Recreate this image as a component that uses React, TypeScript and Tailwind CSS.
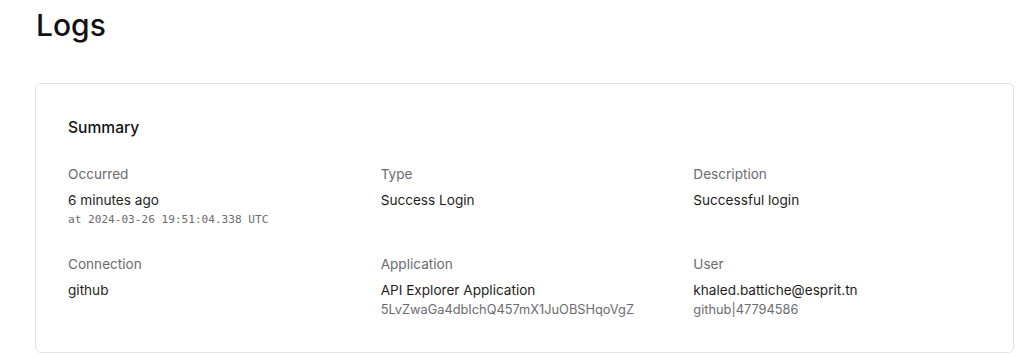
export default function App() {
  const font = { fontFamily: "Inter, 'Noto Sans', sans-serif" };
  const Label = ({ children }: { children: React.ReactNode }) => (
    <div className="text-[13.6px] leading-5 text-[#6b6b70]">{children}</div>
  );
  const Value = ({ children }: { children: React.ReactNode }) => (
    <div className="mt-1.5 text-[13.6px] leading-5 text-[#1e1e22]">{children}</div>
  );
  const Sub = ({ children, mono }: { children: React.ReactNode; mono?: boolean }) => (
    <div
      className={mono ? "text-[11.1px] leading-5 text-[#6b6b70]" : "text-[12.8px] leading-5 text-[#6b6b70]"}
      style={mono ? { fontFamily: "'DejaVu Sans Mono', monospace" } : undefined}
    >
      {children}
    </div>
  );
  return (
    <div className="min-h-[357px] bg-white" style={font}>
      <div className="pl-[36px] pt-[7px]">
        <h1 className="text-[30px] leading-9 font-medium text-[#111114]">Logs</h1>
      </div>
      <div className="ml-[35px] mt-[40px] w-[979px] rounded-md border border-[#e3e3e6] px-8 pt-8 pb-8">
        <h2 className="mb-6 text-[15.6px] leading-6 font-medium text-[#111114]">Summary</h2>
        <div className="grid grid-cols-3 gap-x-[25px] gap-y-6">
          <div>
            <Label>Occurred</Label>
            <Value>6 minutes ago</Value>
            <Sub mono>at 2024-03-26 19:51:04.338 UTC</Sub>
          </div>
          <div>
            <Label>Type</Label>
            <Value>Success Login</Value>
          </div>
          <div>
            <Label>Description</Label>
            <Value>Successful login</Value>
          </div>
          <div>
            <Label>Connection</Label>
            <Value>github</Value>
          </div>
          <div>
            <Label>Application</Label>
            <Value>API Explorer Application</Value>
            <Sub>5LvZwaGa4dbIchQ457mX1JuOBSHqoVgZ</Sub>
          </div>
          <div>
            <Label>User</Label>
            <Value>khaled.battiche@esprit.tn</Value>
            <Sub>github|47794586</Sub>
          </div>
        </div>
      </div>
    </div>
  );
}
